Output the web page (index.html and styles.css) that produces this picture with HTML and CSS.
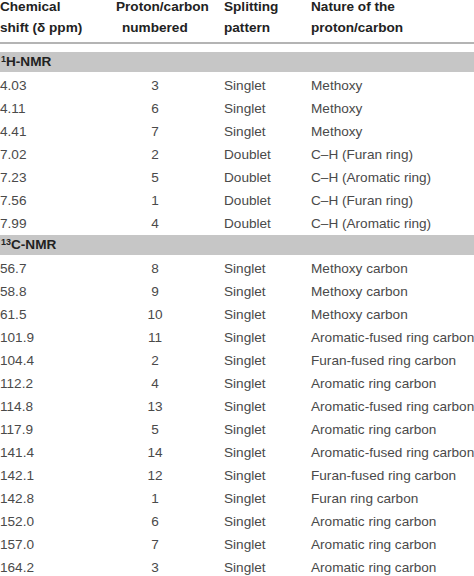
FILE: index.html
```html
<!DOCTYPE html>
<html>
<head>
<meta charset="utf-8">
<link rel="stylesheet" href="styles.css">
</head>
<body>
<div class="table">
  <div class="head">
    <div class="c1"><span class="ln">Chemical</span><span class="ln">shift (δ ppm)</span></div>
    <div class="c2"><span class="ln">Proton/carbon</span><span class="ln ind">numbered</span></div>
    <div class="c3"><span class="ln">Splitting</span><span class="ln">pattern</span></div>
    <div class="c4"><span class="ln">Nature of the</span><span class="ln">proton/carbon</span></div>
  </div>
  <div class="band first"><sup>1</sup>H-NMR</div>
  <div class="rows">
    <div class="row"><div class="c1">4.03</div><div class="c2">3</div><div class="c3">Singlet</div><div class="c4">Methoxy</div></div>
    <div class="row"><div class="c1">4.11</div><div class="c2">6</div><div class="c3">Singlet</div><div class="c4">Methoxy</div></div>
    <div class="row"><div class="c1">4.41</div><div class="c2">7</div><div class="c3">Singlet</div><div class="c4">Methoxy</div></div>
    <div class="row"><div class="c1">7.02</div><div class="c2">2</div><div class="c3">Doublet</div><div class="c4">C–H (Furan ring)</div></div>
    <div class="row"><div class="c1">7.23</div><div class="c2">5</div><div class="c3">Doublet</div><div class="c4">C–H (Aromatic ring)</div></div>
    <div class="row"><div class="c1">7.56</div><div class="c2">1</div><div class="c3">Doublet</div><div class="c4">C–H (Furan ring)</div></div>
    <div class="row"><div class="c1">7.99</div><div class="c2">4</div><div class="c3">Doublet</div><div class="c4">C–H (Aromatic ring)</div></div>
  </div>
  <div class="band"><sup>13</sup>C-NMR</div>
  <div class="rows">
    <div class="row"><div class="c1">56.7</div><div class="c2">8</div><div class="c3">Singlet</div><div class="c4">Methoxy carbon</div></div>
    <div class="row"><div class="c1">58.8</div><div class="c2">9</div><div class="c3">Singlet</div><div class="c4">Methoxy carbon</div></div>
    <div class="row"><div class="c1">61.5</div><div class="c2">10</div><div class="c3">Singlet</div><div class="c4">Methoxy carbon</div></div>
    <div class="row"><div class="c1">101.9</div><div class="c2">11</div><div class="c3">Singlet</div><div class="c4">Aromatic-fused ring carbon</div></div>
    <div class="row"><div class="c1">104.4</div><div class="c2">2</div><div class="c3">Singlet</div><div class="c4">Furan-fused ring carbon</div></div>
    <div class="row"><div class="c1">112.2</div><div class="c2">4</div><div class="c3">Singlet</div><div class="c4">Aromatic ring carbon</div></div>
    <div class="row"><div class="c1">114.8</div><div class="c2">13</div><div class="c3">Singlet</div><div class="c4">Aromatic-fused ring carbon</div></div>
    <div class="row"><div class="c1">117.9</div><div class="c2">5</div><div class="c3">Singlet</div><div class="c4">Aromatic ring carbon</div></div>
    <div class="row"><div class="c1">141.4</div><div class="c2">14</div><div class="c3">Singlet</div><div class="c4">Aromatic-fused ring carbon</div></div>
    <div class="row"><div class="c1">142.1</div><div class="c2">12</div><div class="c3">Singlet</div><div class="c4">Furan-fused ring carbon</div></div>
    <div class="row"><div class="c1">142.8</div><div class="c2">1</div><div class="c3">Singlet</div><div class="c4">Furan ring carbon</div></div>
    <div class="row"><div class="c1">152.0</div><div class="c2">6</div><div class="c3">Singlet</div><div class="c4">Aromatic ring carbon</div></div>
    <div class="row"><div class="c1">157.0</div><div class="c2">7</div><div class="c3">Singlet</div><div class="c4">Aromatic ring carbon</div></div>
    <div class="row"><div class="c1">164.2</div><div class="c2">3</div><div class="c3">Singlet</div><div class="c4">Aromatic ring carbon</div></div>
  </div>
</div>
</body>
</html>
```
FILE: styles.css
```css
html, body {
  margin: 0;
  padding: 0;
  background: #fff;
  overflow: hidden;
}
body {
  width: 474px;
  height: 576px;
  font-family: "Liberation Sans", Arial, sans-serif;
}
.table {
  width: 520px;
  margin-top: -4px;
}
.head, .row {
  display: grid;
  grid-template-columns: 106px 98px 107px 209px;
}
.head {
  font-size: 13.6px;
  font-weight: bold;
  color: #222;
  line-height: 21px;
  padding-bottom: 4px;
  border-bottom: 2px solid #b4b4b4;
}
.ln { display: block; white-space: nowrap; }
.head .c2 { padding-left: 10px; }
.head .ind { padding-left: 6px; }
.head .c3 { padding-left: 20px; }
.band {
  background: #c6c6c6;
  height: 20px;
  line-height: 20px;
  font-size: 13.6px;
  font-weight: bold;
  color: #222;
  padding-left: 1px;
  margin-bottom: 2px;
}
.band.first { margin-top: 8px; }
.band sup {
  font-size: 9px;
  vertical-align: 4px;
  line-height: 0;
}
.rows { display: flex; flex-direction: column; }
.row {
  height: 23px;
  line-height: 23px;
  font-size: 13.6px;
  color: #4a4a4a;
  white-space: nowrap;
}
.row .c1 { padding-left: 0; }
.row .c2 { text-align: center; }
.row .c3 { padding-left: 20px; }
```
